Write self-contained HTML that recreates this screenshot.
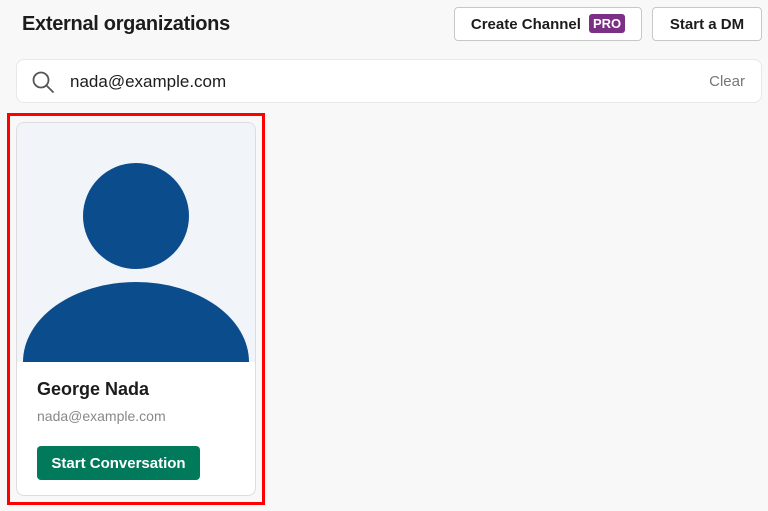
<!DOCTYPE html>
<html><head><style>
body{margin:0;width:768px;height:511px;background:#f8f8f8;font-family:"Liberation Sans",sans-serif;position:relative;overflow:hidden;color:#1d1c1d}
.t{position:absolute;left:22px;top:13px;font-size:20px;font-weight:bold;letter-spacing:-0.3px}
.btn{position:absolute;top:7px;height:32px;border:1px solid #c8c8c8;border-radius:4px;background:#fff;font-size:15px;font-weight:bold;line-height:34px;box-sizing:content-box}
.pro{display:inline-block;background:#7c3085;color:#fff;border-radius:3px;padding:0 4px;font-size:13px;line-height:19px;margin-left:8px;vertical-align:1px}
.search{position:absolute;left:16px;top:59px;width:744px;height:42px;border:1px solid #e8e8e8;border-radius:8px;background:#fff}
.red{position:absolute;left:7px;top:113px;width:252px;height:386px;border:3px solid #f00}
.card{position:absolute;left:16px;top:122px;width:238px;height:372px;border:1px solid #ddd;border-radius:8px;background:#fff;overflow:hidden}
.img{height:239px;background:#f1f4f8;position:relative;overflow:hidden}
</style></head><body>
<div class="t">External organizations</div>
<div class="btn" style="left:454px;width:186px;text-align:center">Create Channel<span class="pro">PRO</span></div>
<div class="btn" style="left:652px;width:108px;text-align:center">Start a DM</div>
<div class="search">
<svg style="position:absolute;left:14px;top:10px" width="24" height="24" viewBox="0 0 24 24"><circle cx="10" cy="10" r="7.5" fill="none" stroke="#555" stroke-width="1.8"/><line x1="15.5" y1="15.5" x2="22" y2="22" stroke="#555" stroke-width="1.8" stroke-linecap="round"/></svg>
<div style="position:absolute;left:53px;top:12px;font-size:17px">nada@example.com</div>
<div style="position:absolute;right:16px;top:13px;font-size:15px;color:#777">Clear</div>
</div>
<div class="red"></div>
<div class="card">
<div class="img"><svg width="238" height="239"><circle cx="119" cy="93" r="53" fill="#0b4c8c"/><ellipse cx="119" cy="239" rx="113" ry="80" fill="#0b4c8c"/></svg></div>
<div style="position:absolute;left:20px;top:256px;font-size:18px;font-weight:bold">George Nada</div>
<div style="position:absolute;left:20px;top:285px;font-size:14px;color:#888">nada@example.com</div>
<div style="position:absolute;left:20px;top:323px;width:163px;height:34px;background:#007a5a;border-radius:4px;color:#fff;font-size:15px;font-weight:bold;text-align:center;line-height:36px">Start Conversation</div>
</div>
</body></html>
